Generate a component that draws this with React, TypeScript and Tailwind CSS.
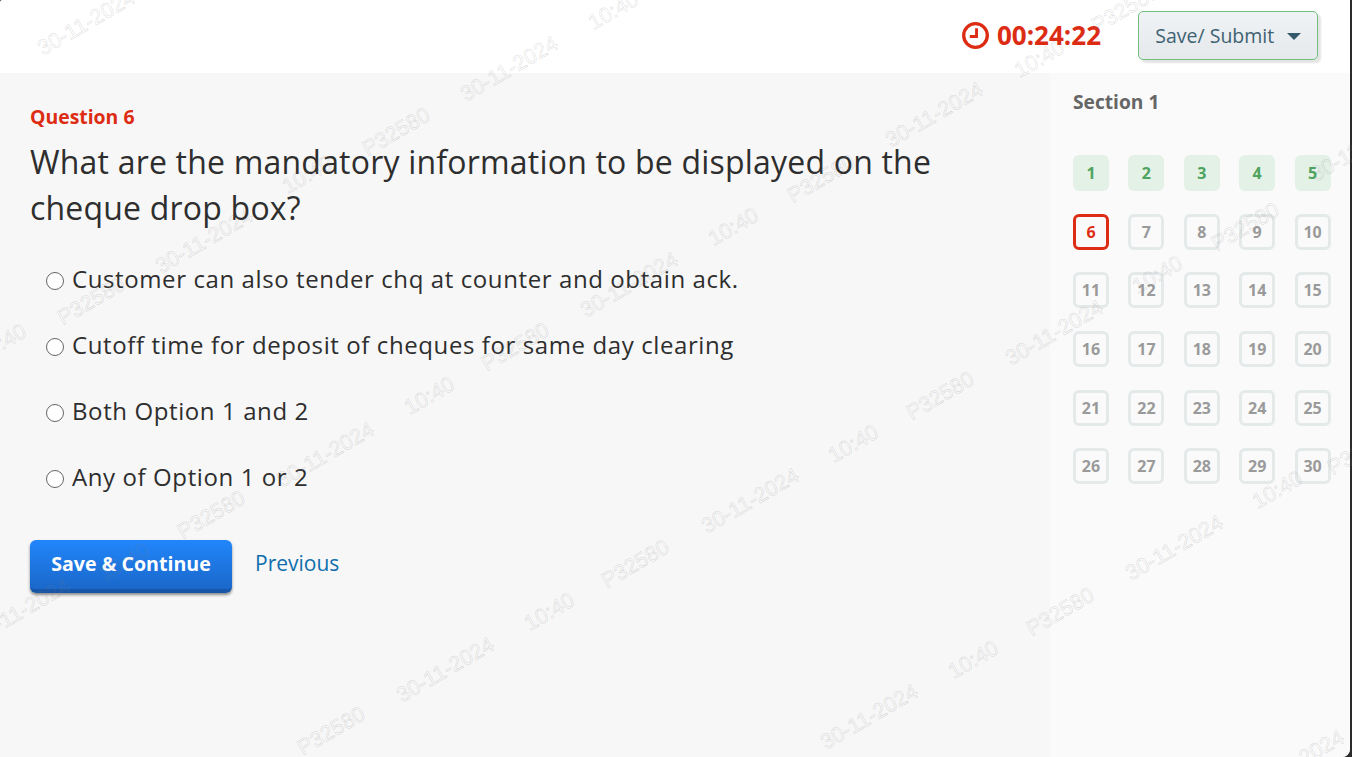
const dates = [
  [87, 24], [510, 70], [935, 116], [205, 242], [630, 286], [1055, 334], [326, 456], [751, 502], [1175, 549], [22, 612],
  [446, 671], [870, 718], [1296, 764], [1360, 150],
];
const times = [
  [614, 12], [1040, 60], [308, 176], [734, 228], [1158, 276], [2, 344], [430, 397], [854, 445], [1278, 491], [125, 563],
  [550, 613], [974, 661],
];
const codes = [
  [1126, 10], [397, 133], [822, 180], [1246, 228], [92, 302], [516, 348], [941, 397], [212, 516], [636, 565], [1061, 613],
  [332, 732], [1362, 452],
];

const nums = Array.from({ length: 30 }, (_, i) => i + 1);

function Watermark() {
  const renderText = (items: number[][], label: string) =>
    items.map(([x, y]) => (
      <text
        key={`${label}-${x}`}
        x={x}
        y={y}
        textAnchor="middle"
        dominantBaseline="middle"
        transform={`rotate(-30 ${x} ${y})`}
      >
        {label}
      </text>
    ));

  return (
    <svg
      width="1352"
      height="757"
      className="pointer-events-none absolute inset-0 z-10 fill-none stroke-[#808080]/30 text-[21.5px] font-['Liberation_Sans',sans-serif]"
      strokeWidth="0.5"
    >
      {renderText(dates, '30-11-2024')}
      {renderText(times, '10:40')}
      {renderText(codes, 'P32580')}
    </svg>
  );
}

function Option({ label }: { label: string }) {
  return (
    <label className="flex h-[66.1px] items-start gap-[8px] pl-[16px] text-[24px] leading-[34px] tracking-[0.6px] text-[#2e2e2e]">
      <span className="mt-[10px] h-[18px] w-[18px] shrink-0 rounded-full border border-[#666666] bg-white" />
      <span>{label}</span>
    </label>
  );
}

function NavCell({ n }: { n: number }) {
  let cls = 'border-[3px] border-[#e4e9e9] text-[#9a9a9a]';
  if (n <= 5) cls = 'bg-[#e3f1e6] text-[#4ea35f]';
  if (n === 6) cls = 'border-[3px] border-[#dd2c14] text-[#dd2c14]';
  return (
    <div className={`flex h-[36px] w-[36px] items-center justify-center rounded-[6px] text-[16px] font-bold ${cls}`}>
      {n}
    </div>
  );
}

export default function App() {
  return (
    <div className="relative h-[757px] w-[1352px] overflow-hidden bg-[#2b2b2b] font-['Open_Sans',sans-serif]">
      <div className="flex h-[757px] w-[1350px] flex-col overflow-hidden rounded-br-[8px] rounded-tl-[2px] bg-white">
        <header className="flex h-[73px] shrink-0 items-center justify-end pb-[2px] pr-[32px]">
          <div className="mr-[37px] flex items-center gap-[7px] text-[26px] font-bold text-[#dd2c14]">
            <svg width="29" height="29" viewBox="0 0 28 28" fill="none" stroke="#dd2c14">
              <circle cx="14" cy="14" r="11.4" strokeWidth="3.2" />
              <path d="M15 7V15H8.5" strokeWidth="2.8" />
            </svg>
            <span>00:24:22</span>
          </div>
          <button
            type="button"
            className="flex h-[49px] w-[180px] items-center justify-center gap-[12.5px] rounded-[5px] border border-[#6fc07f] bg-gradient-to-b from-[#f0f3f5] to-[#e5e9ec] text-[19.5px] text-[#3f6272] shadow-[3px_3px_2px_#e4e4e4]"
          >
            <span>Save/ Submit</span>
            <span className="mt-[2px] h-0 w-0 border-x-[7px] border-t-[7px] border-x-transparent border-t-[#34596b]" />
          </button>
        </header>

        <div className="flex min-h-0 flex-1">
          <main className="w-[1050px] bg-[#f7f7f7] pl-[30px] pt-[30px]">
            <div className="text-[19.4px] font-bold leading-[28px] text-[#dd2c14]">Question 6</div>
            <h1 className="mt-[8px] w-[960px] text-[32px] font-normal leading-[46px] tracking-[0.2px] text-[#2e2e2e]">
              What are the mandatory information to be displayed on the cheque drop box?
            </h1>
            <div className="mt-[30.7px]">
              <Option label="Customer can also tender chq at counter and obtain ack." />
              <Option label="Cutoff time for deposit of cheques for same day clearing" />
              <Option label="Both Option 1 and 2" />
              <Option label="Any of Option 1 or 2" />
            </div>
            <div className="mt-[13.5px] flex items-center gap-[23px]">
              <button
                type="button"
                className="h-[53px] w-[202px] rounded-[6px] border-b-[4px] border-[#1756a8] bg-gradient-to-b from-[#2186fb] to-[#1a68ca] text-[19.6px] font-bold text-white shadow-[0_2px_3px_#8a8a8a]"
              >
                Save &amp; Continue
              </button>
              <a className="mb-[4px] text-[21px] text-[#0f6fad]">Previous</a>
            </div>
          </main>

          <aside className="flex-1 bg-[#fafafa] pl-[23px] pr-[19px] pt-[15px]">
            <div className="text-[19.2px] font-bold leading-[28px] text-[#666666]">Section 1</div>
            <div className="mt-[39.3px] grid grid-cols-[repeat(5,36px)] gap-x-[19.4px] gap-y-[22.6px]">
              {nums.map((n) => (
                <NavCell key={n} n={n} />
              ))}
            </div>
          </aside>
        </div>
      </div>
      <Watermark />
    </div>
  );
}
